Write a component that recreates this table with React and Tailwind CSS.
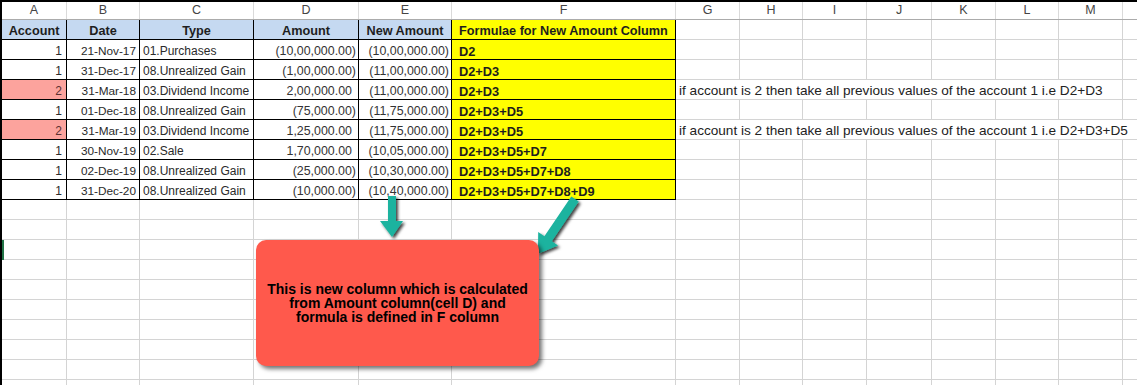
import React from "react";

const COLS = [
  { k: "A", w: "w-[65px]" },
  { k: "B", w: "w-[73px]" },
  { k: "C", w: "w-[114px]" },
  { k: "D", w: "w-[105px]" },
  { k: "E", w: "w-[93px]" },
  { k: "F", w: "w-[224px]" },
  { k: "G", w: "w-[64px]" },
  { k: "H", w: "w-[63px]" },
  { k: "I", w: "w-[64px]" },
  { k: "J", w: "w-[65px]" },
  { k: "K", w: "w-[64px]" },
  { k: "L", w: "w-[63px]" },
  { k: "M", w: "w-[64px]" },
  { k: "", w: "w-[64px]" },
];

const ROWS = [
  ["1", "21-Nov-17", "01.Purchases", "(10,00,000.00)", "(10,00,000.00)", "D2", false, null],
  ["1", "31-Dec-17", "08.Unrealized Gain", "(1,00,000.00)", "(11,00,000.00)", "D2+D3", false, null],
  ["2", "31-Mar-18", "03.Dividend Income", "2,00,000.00", "(11,00,000.00)", "D2+D3", true,
    "if account is 2 then take all previous values of the account 1 i.e D2+D3"],
  ["1", "01-Dec-18", "08.Unrealized Gain", "(75,000.00)", "(11,75,000.00)", "D2+D3+D5", false, null],
  ["2", "31-Mar-19", "03.Dividend Income", "1,25,000.00", "(11,75,000.00)", "D2+D3+D5", true,
    "if account is 2 then take all previous values of the account 1 i.e D2+D3+D5"],
  ["1", "30-Nov-19", "02.Sale", "1,70,000.00", "(10,05,000.00)", "D2+D3+D5+D7", false, null],
  ["1", "02-Dec-19", "08.Unrealized Gain", "(25,000.00)", "(10,30,000.00)", "D2+D3+D5+D7+D8", false, null],
  ["1", "31-Dec-20", "08.Unrealized Gain", "(10,000.00)", "(10,40,000.00)", "D2+D3+D5+D7+D8+D9", false, null],
];

const EXTRA = COLS.slice(6);

function GridCell({ w }) {
  return <div className={`${w} h-full shrink-0 border-r border-b border-[#d4d4d4]`} />;
}

function TCell({ w, className = "", children }) {
  return (
    <div
      className={`${w} h-full shrink-0 border-r border-b border-black flex items-end leading-[15px] whitespace-nowrap overflow-hidden ${className}`}
    >
      {children}
    </div>
  );
}

export default function App() {
  const font = { fontFamily: "'Liberation Sans', Arial, sans-serif" };
  return (
    <div
      className="relative w-[1137px] h-[385px] overflow-hidden bg-white border-t-2 border-l-2 border-black text-[12px] text-[#2a2a2a]"
      style={font}
    >
      {/* column letters */}
      <div className="flex h-[18px] border-b border-[#ababab]">
        {COLS.map((c, i) => (
          <div
            key={i}
            className={`${c.w} h-full shrink-0 border-r border-[#dadada] flex items-center justify-center text-[12.5px] text-[#444]`}
          >
            {c.k}
          </div>
        ))}
      </div>

      {/* header row */}
      <div className="flex h-[20px] font-bold text-[12.7px] text-[#1e1e1e]">
        <TCell w="w-[65px]" className="bg-[#c5d9f1] justify-center">Account</TCell>
        <TCell w="w-[73px]" className="bg-[#c5d9f1] justify-center">Date</TCell>
        <TCell w="w-[114px]" className="bg-[#c5d9f1] justify-center">Type</TCell>
        <TCell w="w-[105px]" className="bg-[#c5d9f1] justify-center">Amount</TCell>
        <TCell w="w-[93px]" className="bg-[#c5d9f1] justify-center">New Amount</TCell>
        <TCell w="w-[224px]" className="bg-[#ffff00] pl-[7px]">Formulae for New Amount Column</TCell>
        {EXTRA.map((c, i) => (
          <GridCell key={i} w={c.w} />
        ))}
      </div>

      {/* data rows */}
      {ROWS.map((r, i) => {
        const pos = !r[3].startsWith("(");
        return (
          <div key={i} className="flex h-[20px]">
            <TCell w="w-[65px]" className={`justify-end pr-[4px] ${r[6] ? "bg-[#fca39d] text-[#5a3030]" : ""}`}>{r[0]}</TCell>
            <TCell w="w-[73px]" className="justify-end pr-[3px] text-[11.8px]">{r[1]}</TCell>
            <TCell w="w-[114px]" className="pl-[3px]">{r[2]}</TCell>
            <TCell w="w-[105px]" className={`justify-end text-[12.4px] text-[#333] ${pos ? "pr-[6px]" : "pr-[2px]"}`}>{r[3]}</TCell>
            <TCell w="w-[93px]" className="justify-end pr-[2px] text-[12.4px] text-[#333]">{r[4]}</TCell>
            <TCell w="w-[224px]" className="bg-[#ffff00] pl-[7px] font-bold text-[12.8px] text-[#1e1e1e]">{r[5]}</TCell>
            {r[7] ? (
              i === 2 ? (
                <>
                  <div className="w-[447px] h-full shrink-0 border-r border-b border-[#d4d4d4] flex items-end leading-[16px] pl-[3px] whitespace-nowrap text-[13.6px] text-[#222]">
                    {r[7]}
                  </div>
                  <GridCell w="w-[64px]" />
                </>
              ) : (
                <div className="w-[511px] h-full shrink-0 border-b border-[#d4d4d4] flex items-end leading-[16px] pl-[3px] whitespace-nowrap text-[13.6px] text-[#222]">
                  {r[7]}
                </div>
              )
            ) : (
              EXTRA.map((c, j) => <GridCell key={j} w={c.w} />)
            )}
          </div>
        );
      })}

      {/* empty rows */}
      {Array.from({ length: 10 }).map((_, i) => (
        <div key={i} className="flex h-[20px]">
          {COLS.map((c, j) => (
            <GridCell key={j} w={c.w} />
          ))}
        </div>
      ))}

      {/* active row marker */}
      <div className="absolute left-0 top-[238px] w-[2px] h-[20px] bg-[#217346]" />

      {/* arrows */}
      <svg className="absolute left-[-2px] top-[-2px] pointer-events-none" width="1137" height="385">
        <defs>
          <filter id="sh" x="-50%" y="-50%" width="200%" height="200%">
            <feDropShadow dx="2" dy="2" stdDeviation="1.5" floodColor="#000" floodOpacity="0.75" />
          </filter>
        </defs>
        <polygon
          filter="url(#sh)"
          fill="#1bb39f"
          points="388,196 396,196 396,221 403,221 392,237 380,221 388,221"
        />
        <polygon
          filter="url(#sh)"
          fill="#1bb39f"
          points="571.3,196.5 578.7,201.5 551.8,241.3 558,245.5 538,253.8 538.2,232.1 544.4,236.3"
        />
      </svg>

      {/* callout */}
      <div className="absolute left-[254px] top-[238px] w-[283px] h-[126px] rounded-[10px] bg-[#ff594c] shadow-[3px_3px_4px_rgba(0,0,0,0.55)] flex items-center justify-center">
        <p className="text-center font-bold text-[14px] leading-[14px] text-black">
          This is new column which is calculated
          <br />
          from Amount column(cell D) and
          <br />
          formula is defined in F column
        </p>
      </div>
    </div>
  );
}
